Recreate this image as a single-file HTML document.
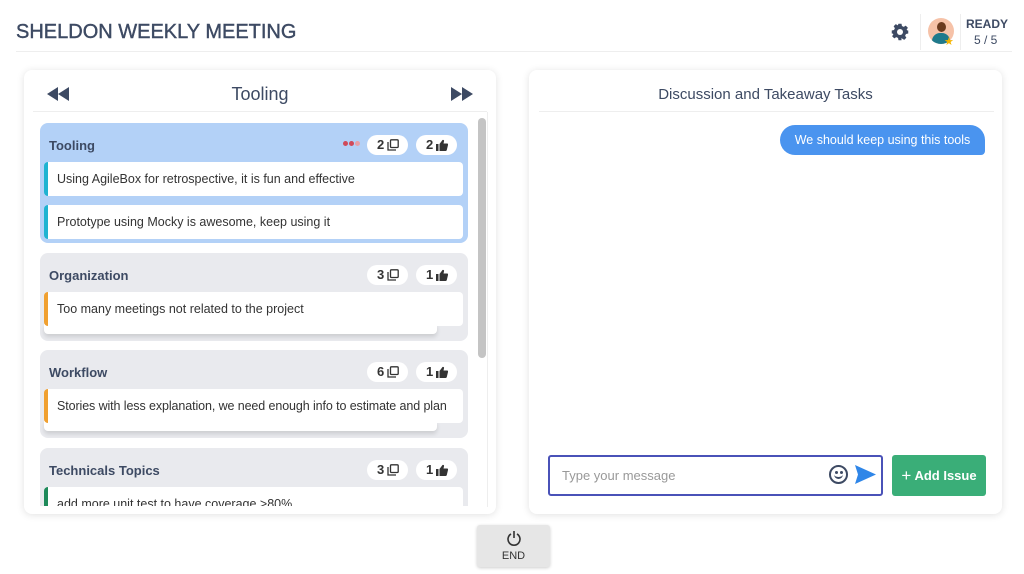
<!DOCTYPE html>
<html><head><meta charset="utf-8"><style>
*{box-sizing:border-box;margin:0;padding:0}
body{width:1024px;height:574px;background:#fff;font-family:"Liberation Sans",sans-serif;color:#3d4a63;position:relative;overflow:hidden}
.abs{position:absolute}
.panel{position:absolute;background:#fff;border-radius:8px;box-shadow:0 1px 8px rgba(0,0,0,.12)}
.card{position:absolute;left:40px;width:428px;border-radius:8px;background:#e9eaee}
.card .t{position:absolute;left:9px;top:15px;font-size:13px;font-weight:bold;color:#3d4a63}
.item{position:absolute;left:4px;width:419px;height:34px;background:#fff;border-radius:4px;font-size:12.5px;color:#333;padding:10px 9px;border-left:4px solid #1fb3d1;white-space:nowrap;overflow:hidden}
.pill{position:absolute;top:12px;height:20px;width:41px;background:#fff;border-radius:10px;font-size:13px;font-weight:bold;line-height:20px;color:#333;padding-left:10px}
.pill svg{position:absolute;right:9px;top:4px}
.stack{position:absolute;left:4px;width:393px;height:10px;border-radius:0 0 4px 4px;box-shadow:0 3px 4px rgba(0,0,0,.12);background:#fff}
</style></head><body>
<svg width="0" height="0" style="position:absolute"><defs>
<symbol id="cp" viewBox="0 0 12 12"><rect x="3.5" y="0.8" width="7.7" height="7.7" rx="1" fill="none" stroke="#333" stroke-width="1.3"/><path d="M1 3v8h8" fill="none" stroke="#333" stroke-width="1.3"/></symbol>
<symbol id="th" viewBox="0 0 12 12"><rect x="0" y="5" width="2.5" height="7" fill="#333"/><path d="M3.5 5L6.5 1c1-.5 1.8.2 1.5 1.2L7.5 4.5H11c1 0 1.2.8 1 1.5L10.8 11c-.2.6-.6 1-1.2 1H3.5z" fill="#333"/></symbol>
</defs></svg>
<div class="abs" style="left:16px;top:21px;font-size:20px;color:#3d4a63;-webkit-text-stroke:0.4px #3d4a63">SHELDON WEEKLY MEETING</div>
<div class="abs" style="left:16px;top:51px;width:996px;height:1px;background:#eee"></div>
<svg class="abs" style="left:891px;top:23px" width="18" height="18" viewBox="0 0 24 24"><path fill="#3d4a63" d="M10 1h4l.6 3 2.4 1.2 2.6-1.7 2.9 2.9-1.7 2.6L22 10h1v4l-3 .6-1.2 2.4 1.7 2.6-2.9 2.9-2.6-1.7L14 20v3h-4l-.6-3-2.4-1.2-2.6 1.7-2.9-2.9 1.7-2.6L2 14H1v-4l3-.6 1.2-2.4-1.7-2.6 2.9-2.9 2.6 1.7L10 1z"/><circle cx="12" cy="12" r="4" fill="#fff"/></svg>
<div class="abs" style="left:920px;top:14px;width:1px;height:36px;background:#eee"></div>
<div class="abs" style="left:960px;top:14px;width:1px;height:36px;background:#eee"></div>
<div class="abs" style="left:928px;top:18px;width:26px;height:26px;border-radius:50%;background:#f6c2a8;overflow:hidden">
<div class="abs" style="left:9px;top:4px;width:9px;height:10px;border-radius:50%;background:#6b3a1e"></div>
<div class="abs" style="left:4px;top:15px;width:18px;height:12px;border-radius:8px 8px 0 0;background:#1f7a8c"></div></div>
<div class="abs" style="left:944px;top:35px;color:#f5b400;font-size:11px">★</div>
<div class="abs" style="left:966px;top:17px;font-size:12px;font-weight:bold;color:#3d4a63">READY</div>
<div class="abs" style="left:974px;top:33px;font-size:12px;color:#3d4a63">5 / 5</div>

<div class="panel" style="left:24px;top:70px;width:472px;height:444px"></div>
<svg class="abs" style="left:47px;top:87px" width="22" height="14" viewBox="0 0 22 14"><path d="M11 0v14L0 7zM22 0v14L11 7z" fill="#3d4a63"/></svg>
<svg class="abs" style="left:451px;top:87px" width="22" height="14" viewBox="0 0 22 14"><path d="M0 0v14L11 7zM11 0v14L22 7z" fill="#3d4a63"/></svg>
<div class="abs" style="left:24px;width:472px;top:84px;text-align:center;font-size:18px">Tooling</div>
<div class="abs" style="left:33px;top:111px;width:454px;height:1px;background:#eee"></div>
<div class="abs" style="left:478px;top:118px;width:8px;height:240px;border-radius:4px;background:#c4c4c4"></div>
<div class="abs" style="left:487px;top:112px;width:1px;height:395px;background:#eee"></div>

<div class="card" style="top:123px;height:120px;background:#b3d1f7"><div class="t">Tooling</div>
<div class="abs" style="left:303px;top:18px;width:5px;height:5px;border-radius:50%;background:#d04a5a"></div>
<div class="abs" style="left:309px;top:18px;width:5px;height:5px;border-radius:50%;background:#d04a5a"></div>
<div class="abs" style="left:315px;top:18px;width:5px;height:5px;border-radius:50%;background:#e8a0a8"></div>
<div class="pill" style="left:327px">2<svg width="12" height="12"><use href="#cp"/></svg></div><div class="pill" style="left:376px">2<svg width="12" height="12"><use href="#th"/></svg></div>
<div class="item" style="top:39px">Using AgileBox for retrospective, it is fun and effective</div>
<div class="item" style="top:82px">Prototype using Mocky is awesome, keep using it</div></div>

<div class="card" style="top:253px;height:88px"><div class="t">Organization</div>
<div class="pill" style="left:327px">3<svg width="12" height="12"><use href="#cp"/></svg></div><div class="pill" style="left:376px">1<svg width="12" height="12"><use href="#th"/></svg></div>
<div class="stack" style="top:71px"></div>
<div class="item" style="top:39px;border-left-color:#f0a030">Too many meetings not related to the project</div></div>

<div class="card" style="top:350px;height:88px"><div class="t">Workflow</div>
<div class="pill" style="left:327px">6<svg width="12" height="12"><use href="#cp"/></svg></div><div class="pill" style="left:376px">1<svg width="12" height="12"><use href="#th"/></svg></div>
<div class="stack" style="top:71px"></div>
<div class="item" style="top:39px;border-left-color:#f0a030;letter-spacing:-0.1px">Stories with less explanation, we need enough info to estimate and plan</div></div>

<div class="abs" style="left:33px;top:448px;width:454px;height:58px;overflow:hidden">
<div class="card" style="left:7px;top:0;height:88px"><div class="t">Technicals Topics</div>
<div class="pill" style="left:327px">3<svg width="12" height="12"><use href="#cp"/></svg></div><div class="pill" style="left:376px">1<svg width="12" height="12"><use href="#th"/></svg></div>
<div class="item" style="top:39px;border-left-color:#1e8a5a">add more unit test to have coverage &gt;80%</div></div></div>

<div class="panel" style="left:529px;top:70px;width:473px;height:444px"></div>
<div class="abs" style="left:529px;width:473px;top:86px;text-align:center;font-size:15px;color:#3d4a63">Discussion and Takeaway Tasks</div>
<div class="abs" style="left:539px;top:111px;width:455px;height:1px;background:#eee"></div>
<div class="abs" style="left:780px;top:125px;width:205px;height:30px;border-radius:15px 15px 4px 15px;background:#4a94ef;color:#fff;font-size:12.5px;line-height:30px;text-align:center">We should keep using this tools</div>

<div class="abs" style="left:548px;top:455px;width:335px;height:41px;border:2px solid #4a52b8;border-radius:3px;padding:11px 12px;font-size:13px;color:#999">Type your message</div>
<div class="abs" style="left:829px;top:465px;width:19px;height:19px;border:2px solid #3d4a63;border-radius:50%"><div class="abs" style="left:4px;top:4px;width:3px;height:3px;background:#3d4a63;border-radius:50%"></div><div class="abs" style="left:9px;top:4px;width:3px;height:3px;background:#3d4a63;border-radius:50%"></div><div class="abs" style="left:3px;top:7px;width:9px;height:5px;border-bottom:2px solid #3d4a63;border-radius:0 0 5px 5px"></div></div>
<svg class="abs" style="left:855px;top:465px" width="21" height="19" viewBox="0 0 21 19"><path fill="#2f86e8" d="M0 0L21 9.5 0 19 3 9.5z"/></svg>
<div class="abs" style="left:892px;top:455px;width:94px;height:41px;background:#3aae78;border-radius:3px;color:#fff;font-size:13px;font-weight:bold;line-height:41px;text-align:center"><span style="font-size:17px;font-weight:normal;vertical-align:-1px">+</span> Add Issue</div>

<div class="abs" style="left:477px;top:525px;width:73px;height:42px;background:#e6e6e6;border-radius:3px;box-shadow:0 1px 3px rgba(0,0,0,.2);text-align:center;font-size:11px;color:#333">
<svg style="margin-top:5px" width="16" height="16" viewBox="0 0 16 16"><path d="M5 4A6 6 0 1 0 11 4" fill="none" stroke="#333" stroke-width="1.6"/><path d="M8 1v7" stroke="#333" stroke-width="1.6"/></svg><div style="margin-top:1px">END</div></div>
</body></html>
